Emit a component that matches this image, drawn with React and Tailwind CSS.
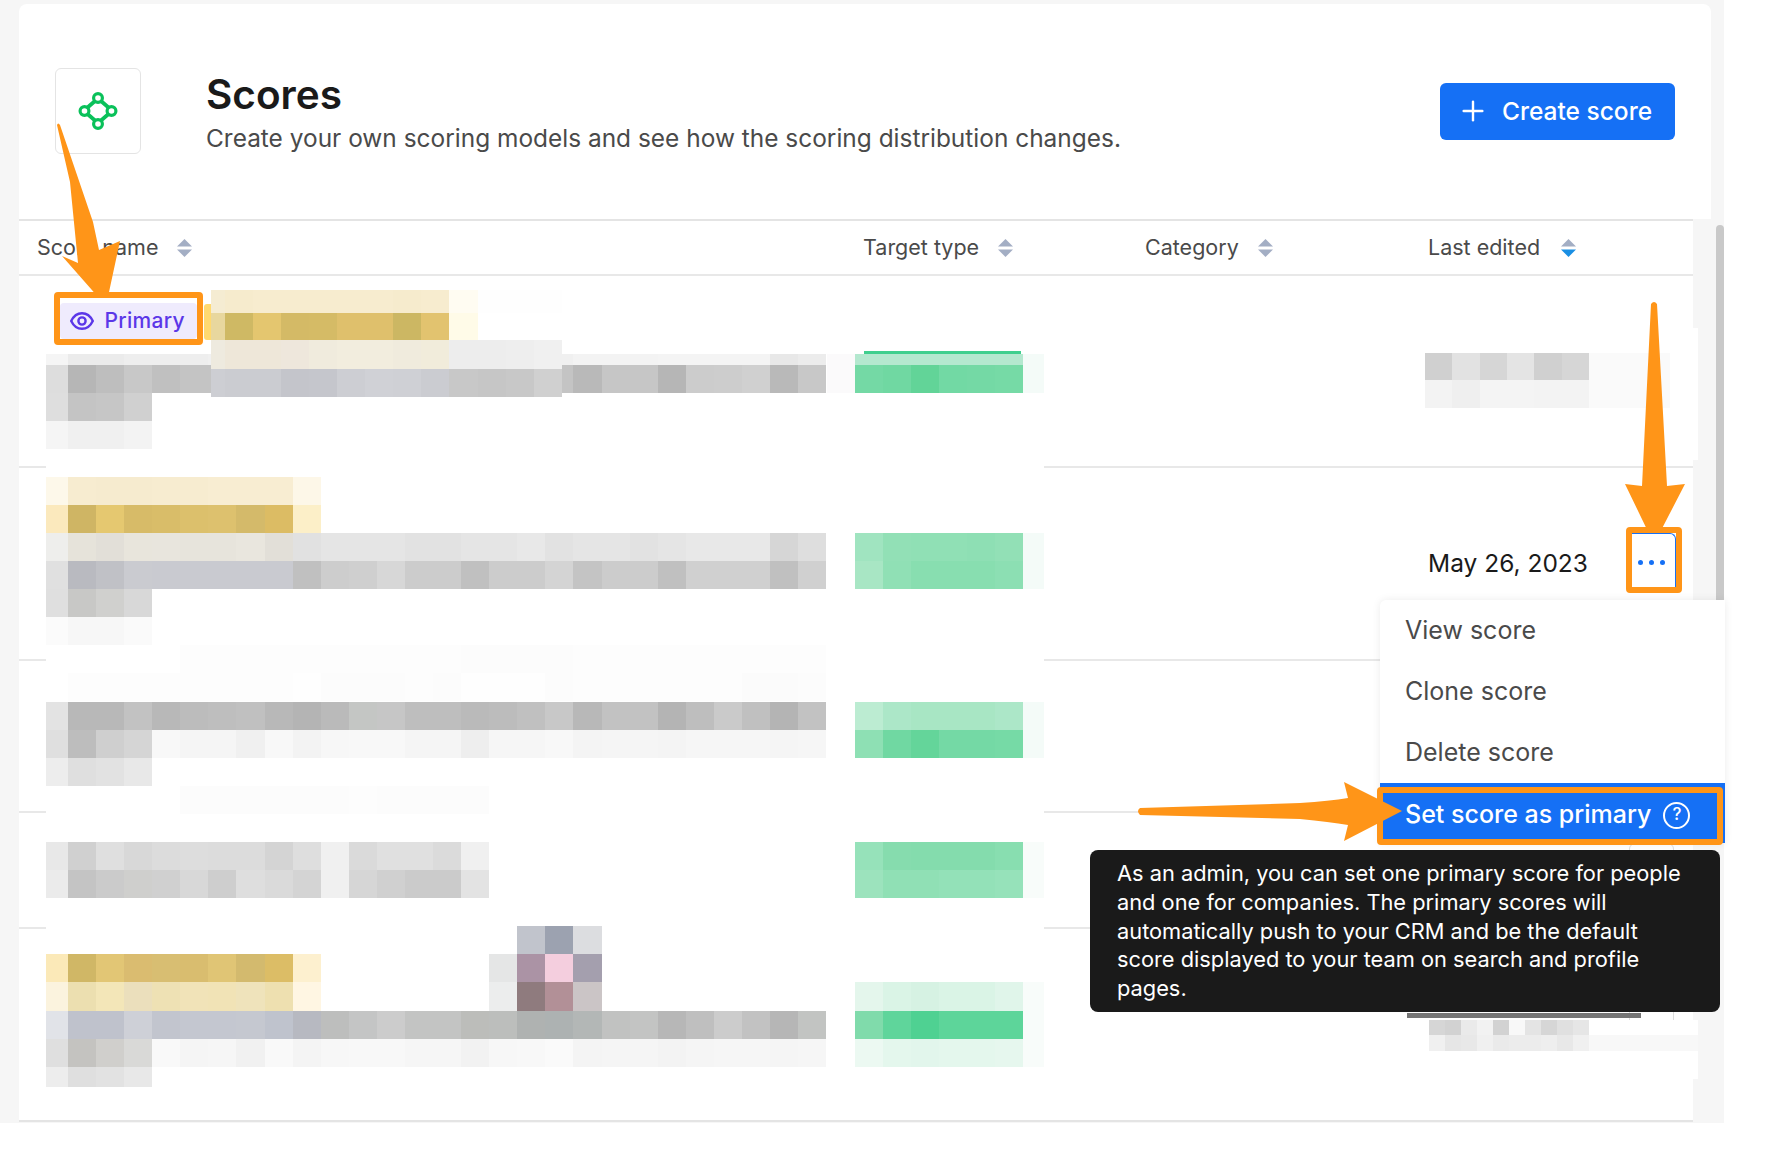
import { Plus } from "lucide-react";

const g = (v) => (typeof v === "number" ? `rgb(${v},${v},${v})` : v);

// redacted table content, cell grid of the blur in the screenshot
// [top, height, first column, cells]
const leftBands = [
  [354, 11, 0, [245, 235, 235, 238, 238, 238, 240, 240, 240, 240, 240, 240, 240, 240, 240, 240, 240, 240, 240, 243, 243, 243, 244, 244, 244, 244, 232, 236]],
  [365, 28, 0, [221, 182, 190, 200, 192, 196, 196, 196, 196, 196, 196, 196, 196, 196, 196, 196, 196, 196, 196, 185, 198, 198, 182, 204, 205, 208, 185, 200]],
  [393, 28, 0, [222, 196, 198, 208]],
  [421, 28, 0, [245, 240, 240, 243]],

  [477, 28, 0, ["#fdf8ea", "#f7ecd0", "#f6ebcf", "#f6ebcf", "#f7ecd0", "#f7ecd0", "#f8edd2", "#f8edd2", "#f8edd2", "#fdf7e8"]],
  [505, 28, 0, ["#fbe9bd", "#cfb564", "#e5c870", "#d7bb68", "#d9bd69", "#dcc06c", "#ddc16e", "#d4ba6a", "#dcbc64", "#fcefc8"]],
  [533, 28, 0, ["#eeeeec", "#e6e3da", "#e2dfd8", "#e8e5dc", "#e8e5dd", "#e7e4dc", "#e7e4dc", "#e9e6de", "#e2dfd8", 225, 229, 229, 229, 226, 226, 229, 229, 232, 226, 229, 229, 226, 229, 232, 232, 232, 214, 222]],
  [561, 28, 0, [224, "#b9bac0", "#c0c1c6", "#cacbd0", "#c9cad0", "#c9cad0", "#c9cad0", "#c9cad0", "#c9cad0", 192, 205, 207, 215, 204, 204, 192, 204, 204, 212, 196, 204, 204, 192, 208, 208, 208, 192, 208]],
  [589, 28, 0, [223, "#c8c8c6", "#d0d0ce", 216]],
  [617, 28, 0, [251, 247, 247, 250]],
  [645, 28, 1, [255, 255, 255, 255, 253, 253, 253, 253, 253, 253, 253, 253, 253, 253, 252, 252, 252, 252, 253, 253, 253, 253, 253, 253, 253, 253, 253]],

  [673, 28, 1, [253, 253, 253, 253, 253, 253, 253, 253, 254, 252, 252, 252, 253, 252, 254, 254, 254, 252, 253, 253, 253, 253, 253, 253, 251, 251, 252]],
  [702, 28, 0, [227, 184, 184, 194, 184, 188, 190, 192, 184, 180, 186, "#c4c6c4", 198, 190, 190, 186, 188, 192, 200, 184, 194, 194, 180, 190, 202, 192, 180, 194]],
  [730, 28, 0, [223, 189, 207, 213, 248, 245, 245, 240, 248, 243, 247, 248, 248, 245, 245, 238, 246, 246, 248, 244, 245, 245, 244, 246, 246, 246, 245, 246]],
  [758, 28, 0, [237, 223, 226, 232]],
  [786, 28, 5, [252, 252, 252, 252, 252, 252, 253, 252, 252, 252, 252]],

  [842, 28, 0, [232, 208, 223, 216, 220, 221, 220, 220, 212, 222, 240, 218, 224, 224, 219, 240]],
  [870, 28, 0, [235, 196, 203, "#cfcfcd", 208, 216, 206, 222, 218, 212, 240, 214, 208, 203, 203, 227]],

  [926, 28, 17, ["#c1c4cc", "#9ca2b0", "#dcdde0"]],
  [954, 28, 0, ["#fbe9b8", "#d0b766", "#e2c675", "#dabc70", "#d8be72", "#d9bd6f", "#e0c575", "#d3ba6e", "#dcbd66", "#fdf0cf"]],
  [954, 28, 16, ["#e5e6e6", "#ab93a5", "#f4cede", "#a49fae"]],
  [982, 29, 0, ["#fbf3de", "#ecdfb0", "#f3e6b8", "#ebdfbc", "#eee1b4", "#f1e3b8", "#f1e3b6", "#efe3bb", "#eee0b0", "#fff6e3"]],
  [982, 29, 16, ["#eceded", "#8f7b7e", "#b29097", "#cbc5c6"]],
  [1011, 28, 0, ["#e1e3e8", "#bfc2cc", "#bfc2cc", "#ced0d7", "#c2c5ce", "#c4c7d0", "#c4c7d0", "#c5c8d0", "#bfc3cd", "#b7b9c1", "#bdbebd", "#c4c5c5", 204, "#c3c4c3", "#c3c4c3", "#bcbdba", "#bcbebc", "#afb2b1", "#adb2b2", "#b3b7b6", "#c1c2c1", "#c3c4c3", 183, 191, 204, 194, 182, "#c2c4c2"]],
  [1039, 28, 0, [223, "#c4c3c0", "#d0cfcc", "#d9d9d7", 249, 245, 246, 241, 249, 244, 247, 248, 248, 246, 246, 242, 247, 248, 250, 244, 245, 245, 243, 245, 246, 246, 245, 246]],
  [1067, 20, 0, [237, 223, 226, 232]],
];

const primaryOverlay = [
  [290, 23, ["#f5ecd2", "#f6ebcd", "#f7eccf", "#f7eccf", "#f7eccf", "#f7eccf", "#f7eccf", "#f6ebcd", "#f7eccf", "#fffcf2", "#fefefe", "#fefefe", "#fefefe"]],
  [313, 27, ["#e8d79e", "#cfb964", "#e4c66f", "#d4ba66", "#d5bb66", "#dfc06c", "#dfc06c", "#ccb763", "#e2c36f", "#fffbe8", "#ffffff", "#ffffff", "#ffffff"]],
  [340, 29, ["#eeeadf", "#eee7d9", "#eee7d9", "#eee7dc", "#f0ebdd", "#f2edde", "#f2edde", "#f0ebdd", "#f1ecdb", 237, 237, 238, 240]],
  [369, 28, ["#cdced3", "#cbccd1", "#cbccd1", "#c4c5cb", "#c5c6cc", "#cdced3", "#d0d1d6", "#cfd0d5", "#cbccd1", 200, 198, 200, 208]],
];

const greenBands = [
  [365, 28, ["#74d9a5", "#70d8a2", "#62d498", "#72d9a4", "#74d9a5", "#76daa6"]],
  [533, 28, ["#a0e4c0", "#92e0b6", "#90e0b5", "#90e0b5", "#8edfb4", "#92e0b6"]],
  [561, 28, ["#a8e6c4", "#90e0b5", "#88deb0", "#88deb0", "#88deb0", "#8cdfb3"]],
  [702, 28, ["#bcecd2", "#ace7c8", "#a8e6c4", "#a8e6c4", "#a8e6c4", "#ace7c8"]],
  [730, 28, ["#8ee0b4", "#70d8a2", "#64d59a", "#74d9a5", "#74d9a5", "#76daa6"]],
  [842, 28, ["#96e2ba", "#86dcae", "#84dcad", "#84dcad", "#84dcad", "#88deb0"]],
  [870, 28, ["#9ce3bd", "#90e0b5", "#90e0b5", "#93e1b8", "#93e1b8", "#96e2ba"]],
  [982, 29, ["#e4f6ec", "#daf4e6", "#d6f2e3", "#daf4e6", "#daf4e6", "#e0f5ea"]],
  [1011, 28, ["#80dbab", "#5fd59b", "#4fd192", "#5dd59a", "#5dd59a", "#5dd59a"]],
  [1039, 28, ["#ecf9f2", "#e4f7ed", "#e2f6ec", "#e4f7ed", "#e4f7ed", "#e6f7ee"]],
];

const dateCells = [
  [353, 27, 1425, 27.3, [208, 226, 214, 228, 208, 214]],
  [380, 28, 1425, 27.3, [243, 239, 244, 244, 243, 243]],
  [1020, 15, 1429, 16, [214, 210, 234, 242, 210, 248, 228, 214, 224, 230]],
  [1035, 16, 1429, 16, [240, 230, 232, 240, 234, 236, 236, 238, 232, 240]],
];

function Redaction() {
  const cells = [];
  leftBands.forEach(([y, h, start, fills], b) =>
    fills.forEach((f, i) => {
      const col = start + i;
      const x = col === 0 ? 46 : 68 + 28.08 * (col - 1);
      const w = col === 0 ? 22 : 28.08;
      cells.push(<rect key={`l${b}-${i}`} x={x} y={y} width={w} height={h} fill={g(f)} />);
    })
  );
  greenBands.forEach(([y, h, fills], b) =>
    fills.forEach((f, i) => (
      cells.push(<rect key={`g${b}-${i}`} x={854.6 + 28.1 * i} y={y} width={28.1} height={h} fill={f} />)
    ))
  );
  primaryOverlay.forEach(([y, h, fills], b) =>
    fills.forEach((f, i) => {
      const x = i === 0 ? 211 : 224.6 + 28.1 * (i - 1);
      const w = i === 0 ? 13.6 : 28.1;
      cells.push(<rect key={`p${b}-${i}`} x={x} y={y} width={w} height={h} fill={g(f)} />);
    })
  );
  dateCells.forEach(([y, h, x0, w, fills], b) =>
    fills.forEach((f, i) => (
      cells.push(<rect key={`d${b}-${i}`} x={x0 + w * i} y={y} width={w} height={h} fill={g(f)} />)
    ))
  );

  return (
    <svg className="absolute left-0 top-0 pointer-events-none" width="1766" height="1164" viewBox="0 0 1766 1164" shapeRendering="crispEdges">
      <rect x="46" y="277" width="998" height="812" fill="#ffffff" />
      <rect x="827" y="354" width="28" height="39" fill="#fbfafb" />
      <rect x="1023" y="354" width="21" height="39" fill="#f4fbf8" />
      <rect x="1023" y="533" width="21" height="56" fill="#f4fbf8" />
      <rect x="1023" y="702" width="21" height="56" fill="#f4fbf8" />
      <rect x="1023" y="842" width="21" height="56" fill="#f8fcfa" />
      <rect x="1023" y="982" width="21" height="85" fill="#f8fcfa" />
      <rect x="1670" y="328" width="28" height="132" fill="#ffffff" />
      <rect x="1589" y="353" width="81" height="55" fill="#fafafa" />
      <rect x="1407" y="1020" width="291" height="59" fill="#ffffff" />
      <rect x="1589" y="1035" width="109" height="16" fill="#f8f8f8" />
      <rect x="1407" y="1013" width="234" height="5" fill="#757575" />
      <rect x="204" y="304" width="10" height="36" rx="3" fill="#ffd970" shapeRendering="auto" />
      <rect x="864" y="351" width="157" height="4" rx="1" fill="#3fcf8e" />
      <rect x="854.6" y="354" width="168.6" height="11" fill="#b4e8cf" />
      {cells}
    </svg>
  );
}

function SortIcon({ active }) {
  return (
    <svg width="15" height="18" viewBox="0 0 15 18" className="shrink-0">
      <path d="M7.5 0L15 7.5H0z" fill="#a3aec4" />
      <path d="M0 10.5h15L7.5 18z" fill={active ? "#1a8fe3" : "#a3aec4"} />
    </svg>
  );
}

function HeaderCell({ label, active }) {
  return (
    <div className={`flex items-center text-[#4a4a4a] text-[21.5px] ${active ? "gap-[21px]" : "gap-[19px]"}`}>
      {label}
      <SortIcon active={active} />
    </div>
  );
}

function ScoreLogo() {
  return (
    <svg width="40" height="40" viewBox="0 0 40 40" fill="none" stroke="#0ac15a" strokeWidth="3.2">
      <path d="M17 10L9.5 16.5M23 10L30.5 16.5M9.5 23L17 29.5M30.5 23L23 29.5" strokeWidth="3.8" />
      <circle cx="20" cy="7" r="4.4" />
      <circle cx="6.5" cy="20" r="4.4" />
      <circle cx="33.5" cy="20" r="4.4" />
      <circle cx="20" cy="33" r="4.4" />
    </svg>
  );
}

function EyeIcon() {
  return (
    <svg width="24" height="18" viewBox="0 0 24 18" fill="none" stroke="#5b37e8" strokeWidth="2.4">
      <path d="M1.2 9C3.6 4 7.4 1.2 12 1.2S20.4 4 22.8 9C20.4 14 16.6 16.8 12 16.8S3.6 14 1.2 9z" />
      <circle cx="12" cy="9" r="3.6" />
    </svg>
  );
}

function Arrows() {
  return (
    <svg className="absolute left-0 top-0 pointer-events-none" width="1766" height="1164" viewBox="0 0 1766 1164" fill="#ff9518">
      <path d="M57 125Q58 122 60 125L93 222L99 250L120 241L106 306L62 256L78 263L70 182z" />
      <path d="M1651 304Q1654 300 1657 304L1667 486L1685 484L1654 544L1625 484L1642 486z" />
      <path d="M1140 808L1300 803Q1330 801 1348 798L1344 782L1402 811L1344 841L1348 825Q1330 822 1300 819L1140 815Q1136 811 1140 808z" />
    </svg>
  );
}

export default function App() {
  return (
    <div className="relative w-[1766px] h-[1164px] bg-white overflow-hidden font-['Inter',sans-serif]">
      <div className="w-[1724px] h-[1123px] bg-[#f6f6f6] pt-1 pl-[19px]">
        <header className="w-[1692px] h-[215px] bg-white rounded-t-lg flex items-center pl-9 pr-9 pb-[2px]">
          <div className="w-[86px] h-[86px] border border-[#e4e4e4] rounded-md flex items-center justify-center mr-[65px]">
            <ScoreLogo />
          </div>
          <div className="flex-1 pt-[2px]">
            <h1 className="text-[40.5px] leading-[48px] font-semibold text-[#1a1a1a]">Scores</h1>
            <p className="text-[24.45px] leading-[30px] mt-[4px] text-[#4a4a4a]">
              Create your own scoring models and see how the scoring distribution changes.
            </p>
          </div>
          <button className="w-[235px] h-[57px] bg-[#1570f5] rounded-md text-white text-[24.5px] font-medium flex items-center justify-center gap-[13px] pr-[6px] mt-[1px]">
            <Plus size={32} strokeWidth={1.8} />
            Create score
          </button>
        </header>

        <div className="w-[1674px] h-[902px] bg-white border-t-2 border-[#e4e4e4]">
          <div className="h-[55px] grid grid-cols-[826px_282px_283px_1fr] pl-[18px] items-center border-b-2 border-[#e8e8e8]">
            <HeaderCell label="Score name" />
            <HeaderCell label="Target type" />
            <HeaderCell label="Category" />
            <HeaderCell label="Last edited" active />
          </div>

          <div className="h-[192px] border-b-2 border-[#e8e8e8] pl-[34.5px] pt-[16px]">
            <div className="relative z-10 w-[149px] h-[53px] border-[6px] border-[#ff9518] rounded-sm bg-white flex items-end">
              <div className="w-[137px] h-[36px] bg-[#efebfd] rounded-sm flex items-center pl-[10px] gap-[11px] text-[#5b37e8] text-[21px] font-medium tracking-[0.3px]">
                <EyeIcon />
                Primary
              </div>
            </div>
          </div>

          <div className="h-[193px] border-b-2 border-[#e8e8e8] grid grid-cols-[1409px_1fr] items-center">
            <div />
            <div className="flex items-center text-[24.5px] text-[#1a1a1a]">
              <span className="w-[198px]">May 26, 2023</span>
              <div className="relative z-10 w-[56px] h-[66px] border-[6px] border-[#ff9518] rounded-sm bg-white -mt-[8px]">
                <div className="h-[54px] border-t border-r border-[#1570f5] rounded-tr-md flex items-center justify-center gap-[6px] pt-[5px] pr-[5px]">
                  <span className="w-[5px] h-[5px] rounded-full bg-[#1570f5]" />
                  <span className="w-[5px] h-[5px] rounded-full bg-[#1570f5]" />
                  <span className="w-[5px] h-[5px] rounded-full bg-[#1570f5]" />
                </div>
              </div>
            </div>
          </div>

          <div className="h-[152px] border-b-2 border-[#e8e8e8]" />
          <div className="h-[116px] border-b-2 border-[#e8e8e8]" />
          <div className="h-[193px] border-b-2 border-[#e4e4e4]" />
        </div>
      </div>

      <div className="absolute left-[1716px] top-[225px] w-2 h-[376px] bg-[#c9c9c9] rounded-t-md" />
      <div className="absolute left-[1629px] top-[843px] w-[45px] h-[187px] border border-[#dddddd] rounded-md" />
      <Redaction />

      {/* row actions menu + help tooltip */}
      <div className="absolute left-[1380px] top-[600px] w-[345px] bg-white rounded-tl-md shadow-[0_0_8px_rgba(0,0,0,0.08)] text-[25px] text-[#4a4a4a]">
        <div className="h-[61px] pl-[25px] flex items-center">View score</div>
        <div className="h-[62px] pl-[25px] flex items-center">Clone score</div>
        <div className="h-[60px] pl-[25px] flex items-center">Delete score</div>
        <div className="h-[60px] bg-[#1570f5] pl-[25px] pt-1 flex items-center gap-[12px] text-white font-medium">
          <span>Set score as primary</span>
          <span className="w-[27px] h-[27px] rounded-full border-2 border-white flex items-center justify-center text-[17px] font-medium">?</span>
        </div>
      </div>
      <div className="absolute left-[1377px] top-[787px] w-[346px] h-[58px] border-[6px] border-[#ff9518] rounded-sm" />

      <div className="absolute left-[1090px] top-[850px] w-[630px] h-[162px] bg-[#1a1a1a] rounded-lg pl-[27px] pr-4 pt-[9px] text-white text-[21.8px] leading-[28.75px]">
        As an admin, you can set one primary score for people
        <br />
        and one for companies. The primary scores will
        <br />
        automatically push to your CRM and be the default
        <br />
        score displayed to your team on search and profile
        <br />
        pages.
      </div>

      <Arrows />
    </div>
  );
}
